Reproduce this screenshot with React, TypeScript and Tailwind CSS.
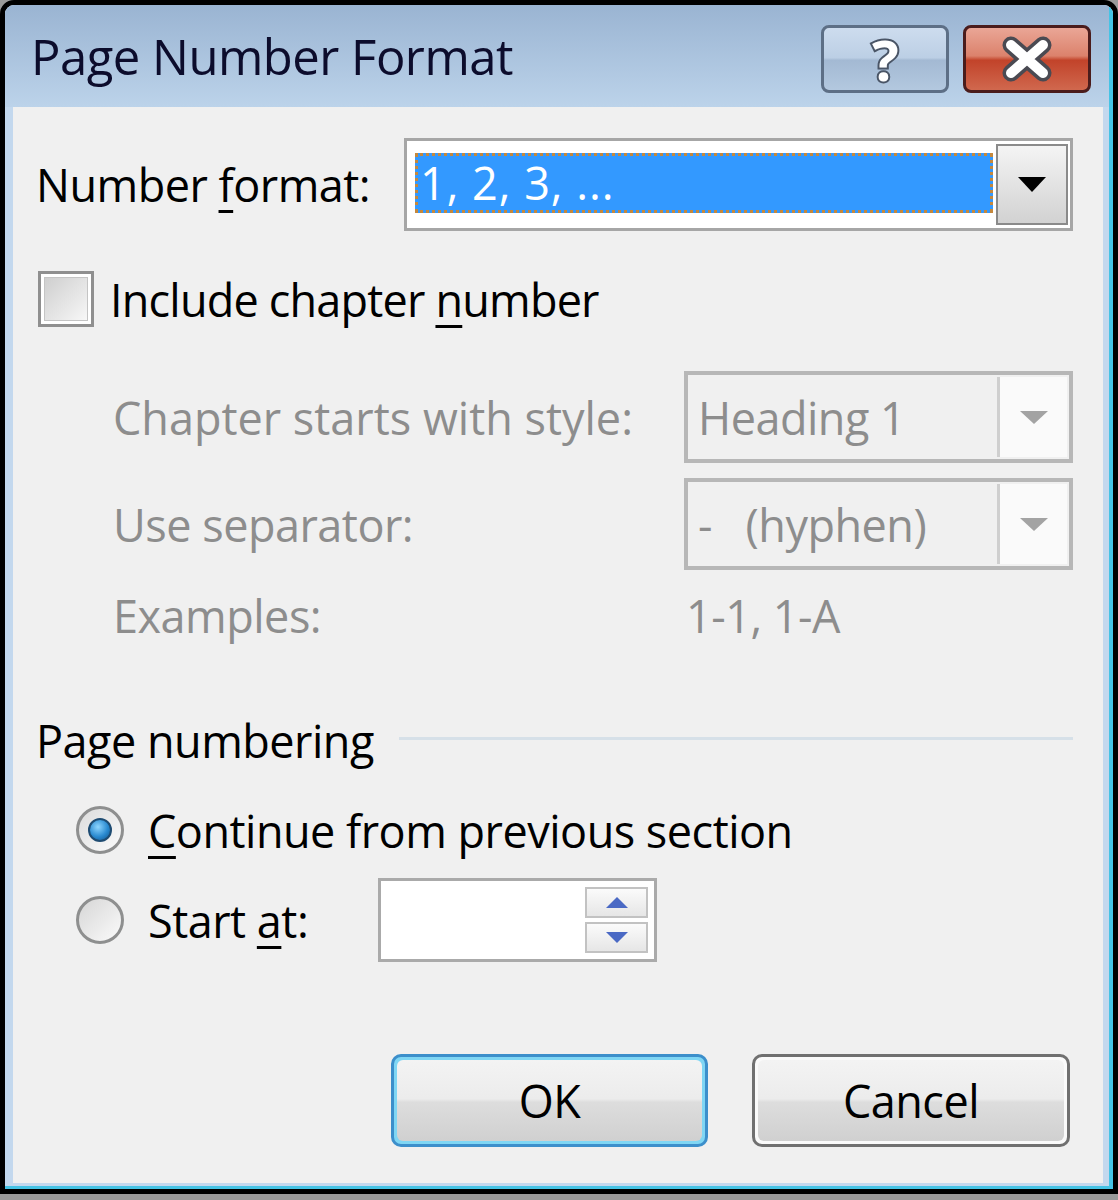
import React from 'react'

// Windows 7 style "Page Number Format" dialog, drawn at ~4.6x scale

function Triangle({ color, w = 28, h = 15 }: { color: string; w?: number; h?: number }) {
  return (
    <svg width={w} height={h} viewBox={`0 0 ${w} ${h}`}>
      <polygon points={`0,0 ${w},0 ${w / 2},${h}`} fill={color} />
    </svg>
  )
}

function DisabledCombo({ value }: { value: string }) {
  return (
    <div className="w-[389px] h-[92px] flex border-[4px] border-[#b7b7b7] bg-[#f0f0f0]">
      <div className="flex-1 flex items-center pl-[10px] text-[#8d8d8d] whitespace-pre">{value}</div>
      <div className="w-[70px] my-[2px] mr-[2px] border-l-[3px] border-[#cfcfcf] bg-[#fafafa] flex items-center justify-center">
        <Triangle color="#a3a3a3" w={28} h={13} />
      </div>
    </div>
  )
}

export default function App() {
  return (
    <div className="w-[1118px] h-[1200px] bg-[#9a9a9a] font-['Open_Sans','Noto_Sans',sans-serif] text-[45px] leading-none tracking-[-0.5px] text-black">
      <div className="h-[1194px] w-full rounded-t-[14px] border-[5px] border-black bg-white overflow-hidden">
        <div className="h-full flex flex-col border-r-[4px] border-b-[3px] border-[#45c3e5] bg-[#c3d8ee]">
          {/* title bar */}
          <div className="h-[102px] shrink-0 flex items-start pl-[26px] pr-[18px] bg-gradient-to-b from-[#9ab4d2] to-[#bcd3ea]">
            <span className="flex-1 mt-[27px] text-[49px] text-[#0c0c2c]">Page Number Format</span>
            <div className="flex gap-[14px] mt-[20px]">
              <div className="w-[128px] h-[68px] rounded-[8px] border-[3px] border-[#5d6f86] bg-[linear-gradient(#cddcee_0%,#bccfe5_48%,#a3b9d3_52%,#b3c8df_100%)] flex items-center justify-center">
                <span className="text-[56px] font-bold text-white [-webkit-text-stroke:4px_#4a5566] [paint-order:stroke_fill]">?</span>
              </div>
              <div className="w-[128px] h-[68px] rounded-[8px] border-[3px] border-[#4a1c1c] bg-[linear-gradient(#eaa696_0%,#dc826c_45%,#c2432a_52%,#d0684e_100%)] flex items-center justify-center">
                <svg width="56" height="46" viewBox="0 0 56 46">
                  <path d="M12 9 L44 37 M44 9 L12 37" stroke="#4a4a52" strokeWidth="17" strokeLinecap="round" />
                  <path d="M12 9 L44 37 M44 9 L12 37" stroke="#ffffff" strokeWidth="10" strokeLinecap="round" />
                </svg>
              </div>
            </div>
          </div>

          {/* body */}
          <div className="flex-1 flex pl-[8px] pr-[6px] pb-[3px]">
            <div className="flex-1 bg-[#f0f0f0] pl-[23px] pr-[30px] pt-[31px] flex flex-col">
              {/* number format */}
              <div className="h-[93px] flex items-center">
                <span className="w-[368px]">Number <u className="underline-offset-[8px] decoration-[3px]">f</u>ormat:</span>
                <div className="flex-1 h-full flex border-[3px] border-[#a6a6a6] bg-white pl-[8px] pr-[2px] py-[3px]">
                  <div className="flex-1 flex items-center pr-[3px]">
                    <div className="w-full h-[60px] mt-[6px] mb-[10px] bg-[#3399ff] border-[3px] border-dotted border-[#c5883c] flex items-center pl-[2px] text-white tracking-[1px]">
                      1, 2, 3, ...
                    </div>
                  </div>
                  <div className="w-[72px] border-[2px] border-[#8a8a8a] bg-gradient-to-b from-[#f4f4f4] to-[#d2d2d2] flex items-center justify-center">
                    <Triangle color="#000000" w={28} h={15} />
                  </div>
                </div>
              </div>

              {/* include chapter number */}
              <div className="mt-[41px] h-[54px] flex items-center pl-[2px] gap-[16px]">
                <div className="w-[56px] h-[56px] border-[3px] border-[#8f8f8f] bg-white p-[3px]">
                  <div className="w-full h-full bg-gradient-to-br from-[#cfcfcf] to-[#f7f7f7] border border-[#c4c4c4]" />
                </div>
                <span className="tracking-[-0.8px]">Include chapter <u className="underline-offset-[8px] decoration-[3px]">n</u>umber</span>
              </div>

              {/* chapter options (disabled) */}
              <div className="mt-[45px] h-[92px] flex items-center pl-[77px] text-[#8d8d8d]">
                <span className="w-[571px] tracking-[0px]">Chapter starts with style:</span>
                <DisabledCombo value="Heading 1" />
              </div>
              <div className="mt-[15px] h-[92px] flex items-center pl-[77px] text-[#8d8d8d]">
                <span className="w-[571px]">Use separator:</span>
                <DisabledCombo value="-   (hyphen)" />
              </div>
              <div className="mt-[15px] h-[60px] flex items-center pl-[77px] text-[#8d8d8d]">
                <span className="w-[573px]">Examples:</span>
                <span>1-1, 1-A</span>
              </div>

              {/* page numbering group */}
              <div className="mt-[65px] h-[60px] flex items-center gap-[25px]">
                <span>Page numbering</span>
                <div className="flex-1 h-[3px] bg-[#d6e0e8] -mt-[4px]" />
              </div>

              <div className="mt-[30px] h-[60px] flex items-center pl-[40px] gap-[24px]">
                <div className="w-[48px] h-[48px] rounded-full border-[3px] border-[#8e8f8f] bg-gradient-to-br from-[#dcdcdc] to-[#fbfbfb] flex items-center justify-center">
                  <div className="w-[24px] h-[24px] rounded-full border-[2px] border-[#1f4c72] bg-[radial-gradient(circle_at_40%_35%,#8fd6ff_0%,#2a8ad0_55%,#0f4f86_100%)]" />
                </div>
                <span><u className="underline-offset-[8px] decoration-[3px]">C</u>ontinue from previous section</span>
              </div>

              <div className="mt-[18px] h-[84px] flex items-center pl-[40px]">
                <div className="w-[48px] h-[48px] rounded-full border-[3px] border-[#8e8f8f] bg-gradient-to-br from-[#d6d6d6] to-[#fbfbfb]" />
                <span className="ml-[24px] w-[230px]">Start <u className="underline-offset-[8px] decoration-[3px]">a</u>t:</span>
                <div className="w-[279px] h-[84px] border-[3px] border-[#aaaaaa] bg-white flex justify-end py-[6px] pr-[6px]">
                  <div className="w-[63px] flex flex-col gap-[4px]">
                    <div className="flex-1 border-[2px] border-[#c2c2c2] bg-gradient-to-b from-[#fbfbfb] to-[#e6e6e6] flex items-center justify-center">
                      <svg width="22" height="11" viewBox="0 0 22 11"><polygon points="0,11 22,11 11,0" fill="#4a69c4" /></svg>
                    </div>
                    <div className="flex-1 border-[2px] border-[#c2c2c2] bg-gradient-to-b from-[#fbfbfb] to-[#e6e6e6] flex items-center justify-center">
                      <Triangle color="#4a69c4" w={22} h={11} />
                    </div>
                  </div>
                </div>
              </div>

              {/* buttons */}
              <div className="mt-[92px] h-[93px] flex justify-end gap-[44px] pr-[3px]">
                <div className="w-[317px] rounded-[10px] border-[3px] border-[#3c8fcb] p-[3px] bg-[#7fd6f4]">
                  <div className="w-full h-full rounded-[6px] bg-[linear-gradient(#f3f3f3_0%,#ececec_48%,#dddddd_52%,#d0d0d0_100%)] flex items-center justify-center">OK</div>
                </div>
                <div className="w-[318px] rounded-[10px] border-[3px] border-[#707070] p-[3px] bg-[#fafafa]">
                  <div className="w-full h-full rounded-[6px] bg-[linear-gradient(#f3f3f3_0%,#ececec_48%,#dddddd_52%,#d0d0d0_100%)] flex items-center justify-center">Cancel</div>
                </div>
              </div>
            </div>
          </div>
        </div>
      </div>
    </div>
  )
}
